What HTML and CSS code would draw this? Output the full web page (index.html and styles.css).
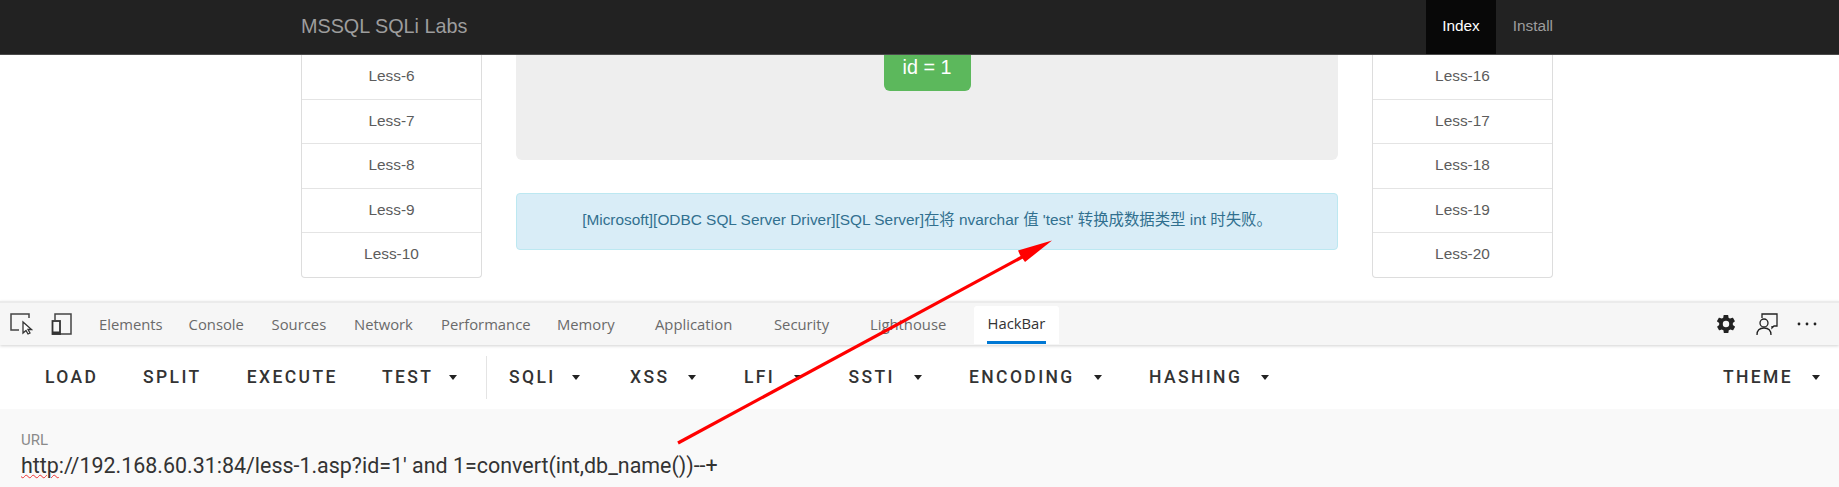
FILE: index.html
```html
<!DOCTYPE html>
<html lang="en">
<head>
<meta charset="utf-8">
<title>MSSQL SQLi Labs</title>
<link rel="stylesheet" href="styles.css">
</head>
<body>
<div class="page">
  <header class="navbar">
    <div class="brand">MSSQL SQLi Labs</div>
    <nav class="nav">
      <a class="nav-link active">Index</a>
      <a class="nav-link">Install</a>
    </nav>
  </header>
  <main class="site">
    <ul class="list">
      <li>Less-6</li><li>Less-7</li><li>Less-8</li><li>Less-9</li><li>Less-10</li>
    </ul>
    <section class="center">
      <div class="jumbo"><span class="btn-id">id = 1</span></div>
      <div class="alert">[Microsoft][ODBC SQL Server Driver][SQL Server]在将 nvarchar 值 'test' 转换成数据类型 int 时失败。</div>
    </section>
    <ul class="list">
      <li>Less-16</li><li>Less-17</li><li>Less-18</li><li>Less-19</li><li>Less-20</li>
    </ul>
  </main>
  <section class="devtools">
    <div class="tabbar">
      <svg class="ic-inspect" width="24" height="24" viewBox="0 0 24 24"><path d="M20 7V3H2v16h8" fill="none" stroke="#444" stroke-width="1.500"/><path d="M14 11v11l3-2.500 2 3.500 2-1-2-3.500h3.500z" fill="#fff" stroke="#333" stroke-width="1.300"/></svg>
      <svg class="ic-device" width="24" height="24" viewBox="0 0 24 24"><path d="M7 9V3h16v20H12" fill="none" stroke="#444" stroke-width="1.500"/><rect x="4.500" y="10" width="7.500" height="13" fill="none" stroke="#333" stroke-width="1.800"/><rect x="4" y="20.500" width="8" height="3" fill="#333"/></svg>
      <div class="tabs">
        <span class="tab t1">Elements</span>
        <span class="tab t2">Console</span>
        <span class="tab t3">Sources</span>
        <span class="tab t4">Network</span>
        <span class="tab t5">Performance</span>
        <span class="tab t6">Memory</span>
        <span class="tab t7">Application</span>
        <span class="tab t8">Security</span>
        <span class="tab t9">Lighthouse</span>
        <span class="tab tab-active"><span class="tab-label">HackBar</span></span>
      </div>
      <div class="tools">
        <svg class="ic-gear" width="22" height="22" viewBox="0 0 24 24"><path fill="#222" d="M19.400 13c.1-.3.1-.7.1-1s0-.7-.1-1l2.100-1.600c.2-.2.2-.4.1-.6l-2-3.500c-.1-.2-.4-.3-.6-.2l-2.500 1c-.5-.4-1.100-.7-1.700-1l-.4-2.600c0-.3-.2-.4-.5-.4h-4c-.3 0-.5.100-.5.400l-.4 2.600c-.6.300-1.200.600-1.700 1l-2.500-1c-.2-.100-.5 0-.6.200l-2 3.500c-.1.200-.1.400.1.600L4.600 11c-.1.300-.1.700-.1 1s0 .7.1 1l-2.100 1.600c-.2.200-.2.400-.1.600l2 3.500c.1.200.4.300.6.200l2.500-1c.5.400 1.100.700 1.700 1l.4 2.600c0 .3.200.4.500.4h4c.3 0 .5-.1.500-.4l.4-2.600c.6-.3 1.200-.6 1.700-1l2.500 1c.2.100.5 0 .6-.2l2-3.500c.1-.2.100-.4-.1-.6zM12 15.500a3.500 3.500 0 1 1 0-7 3.500 3.500 0 0 1 0 7z"/></svg>
        <svg width="24" height="24" viewBox="0 0 24 24"><path d="M7 6V2h15v12h-3l-2 2v-2" fill="none" stroke="#222" stroke-width="1.300"/><circle cx="9" cy="11" r="4" fill="#f6f6f6" stroke="#222" stroke-width="1.300"/><path d="M2 23c0-5 3-7 7-7s7 2 7 7" fill="none" stroke="#222" stroke-width="1.300"/></svg>
        <svg width="22" height="6" viewBox="0 0 22 6"><circle cx="3" cy="3" r="1.400" fill="#222"/><circle cx="11" cy="3" r="1.400" fill="#222"/><circle cx="19" cy="3" r="1.400" fill="#222"/></svg>
      </div>
    </div>
    <div class="hackbar">
      <span class="hb hb-load">LOAD</span>
      <span class="hb hb-split">SPLIT</span>
      <span class="hb hb-exec">EXECUTE</span>
      <span class="hb hb-test">TEST<i class="caret"></i></span>
      <span class="sep"></span>
      <span class="hb hb-sqli">SQLI<i class="caret"></i></span>
      <span class="hb hb-xss">XSS<i class="caret"></i></span>
      <span class="hb hb-lfi">LFI<i class="caret"></i></span>
      <span class="hb hb-ssti">SSTI<i class="caret"></i></span>
      <span class="hb hb-enc">ENCODING<i class="caret"></i></span>
      <span class="hb hb-hash">HASHING<i class="caret"></i></span>
      <span class="hb hb-theme">THEME<i class="caret"></i></span>
    </div>
    <div class="urlbox">
      <div class="url-label">URL</div>
      <div class="url-value"><span class="spell">http</span>://192.168.60.31:84/less-1.asp?id=1' and 1=convert(int,db_name())--+</div>
    </div>
  </section>
  <svg class="arrow" width="1839" height="487" viewBox="0 0 1839 487">
    <path d="M678 443 L1024 256" fill="none" stroke="#f00" stroke-width="3.200"/>
    <path d="M1052 240.500 L1018 250.500 L1020 255 L1025 262 Z" fill="#f00"/>
  </svg>
</div>
</body>
</html>
```
FILE: styles.css
```css
* { box-sizing: border-box; }
html, body { margin: 0; padding: 0; }
body { font-family: "Liberation Sans", "Noto Sans CJK SC", Arial, sans-serif; background: #fff; }
.page { position: relative; width: 1839px; height: 487px; overflow: hidden; }

.navbar { height: 55px; background: #222; border-bottom: 1px solid #4a4a4a; display: flex; justify-content: space-between; padding: 0 286px 0 301px; }
.brand { font-size: 19.800px; line-height: 52px; color: #9d9d9d; }
.nav { display: flex; }
.nav-link { font-size: 15.400px; line-height: 52px; color: #9d9d9d; padding: 0 16.500px; height: 54px; }
.nav-link:last-child { padding-right: 0; }
.nav-link.active { color: #fff; background: #080808; }

.site { height: 246px; display: flex; padding-left: 301px; overflow: hidden; }
.list { list-style: none; margin: 0; padding: 0; width: 181px; height: 223px; border: 1px solid #ddd; border-top: 0; border-radius: 0 0 4px 4px; flex: none; }
.list li { height: 44.600px; font-size: 15.400px; line-height: 42.500px; text-align: center; color: #5c5c5c; border-bottom: 1px solid #e4e4e4; }
.list li:last-child { border-bottom: 0; }
.center { width: 822px; margin: 0 34px; flex: none; }
.jumbo { height: 105px; background: #eee; border-radius: 0 0 6px 6px; display: flex; justify-content: center; align-items: flex-start; }
.btn-id { width: 87px; height: 36px; background: #5cb85c; color: #fff; border-radius: 0 0 6px 6px; font-size: 19.800px; line-height: 24px; text-align: center; }
.alert { margin-top: 33px; height: 57px; background: #d9edf7; border: 1px solid #bce8f1; border-radius: 4px; color: #31708f; font-size: 15.400px; line-height: 52px; text-align: center; white-space: nowrap; }

.devtools { font-family: Roboto, "Noto Sans", sans-serif; }
.tabbar { height: 44px; background: #f6f6f6; border-top: 2px solid #ebebeb; box-shadow: 0 1px 3px rgba(0,0,0,.18); position: relative; z-index: 1; display: flex; align-items: center; padding: 0 0 0 9px; }
.ic-inspect { margin-right: 15px; margin-top: -2px; flex: none; }
.ic-device { flex: none; margin-top: -2px; }
.tabs { display: flex; align-items: center; height: 100%; margin-left: 27px; font-family: "Open Sans", Roboto, sans-serif; font-size: 14.800px; color: #6a6a6a; }
.tab { flex: none; white-space: nowrap; line-height: 38px; }
.t1 { width: 89.600px; } .t2 { width: 83px; } .t3 { width: 82.400px; } .t4 { width: 87px; } .t5 { width: 116px; } .t6 { width: 98px; } .t7 { width: 119px; } .t8 { width: 96px; } .t9 { width: 104px; }
.tab-active { background: #fff; width: 85px; height: 38px; margin-top: 2px; color: #333; display: flex; justify-content: center; border-radius: 3px 3px 0 0; }
.tab-label { border-bottom: 3px solid #0078d4; height: 38px; line-height: 35px; padding: 0 1px; }
.tools { margin-left: auto; display: flex; align-items: center; gap: 17px; padding-right: 21px; }
.ic-gear { margin-right: 1px; }

.hackbar { height: 64px; background: #fff; display: flex; align-items: center; font-size: 17.500px; font-weight: 500; letter-spacing: 2.400px; color: #333; padding-left: 45px; }
.hb { flex: none; white-space: nowrap; display: flex; align-items: center; }
.caret { display: block; width: 0; height: 0; margin-left: 19px; border-left: 4.500px solid transparent; border-right: 4.500px solid transparent; border-top: 5px solid #222; }
.hb-load { width: 98px; } .hb-split { width: 103.700px; } .hb-exec { width: 135.300px; }
.hb-test { width: 103.600px; }
.hb-test .caret, .hb-sqli .caret { margin-left: 16px; }
.sep { width: 1px; height: 43px; background: #e4e4e4; flex: none; margin-right: 22.400px; }
.hb-sqli { width: 121px; }
.hb-xss { width: 114px; }
.hb-lfi { width: 104.600px; }
.hb-ssti { width: 120.400px; }
.hb-enc { width: 180px; }
.hb-hash { width: 574px; }

.urlbox { height: 78px; background: #f9f9f9; padding: 22px 0 0 21px; }
.url-label { font-size: 15px; line-height: 18px; color: #8a8a8a; }
.url-value { font-size: 21.430px; line-height: 28px; margin-top: 3px; color: #333; white-space: nowrap; }
.spell { text-decoration: underline wavy #e33; text-decoration-thickness: 1px; }

.arrow { position: absolute; left: 0; top: 0; pointer-events: none; z-index: 5; }
```
